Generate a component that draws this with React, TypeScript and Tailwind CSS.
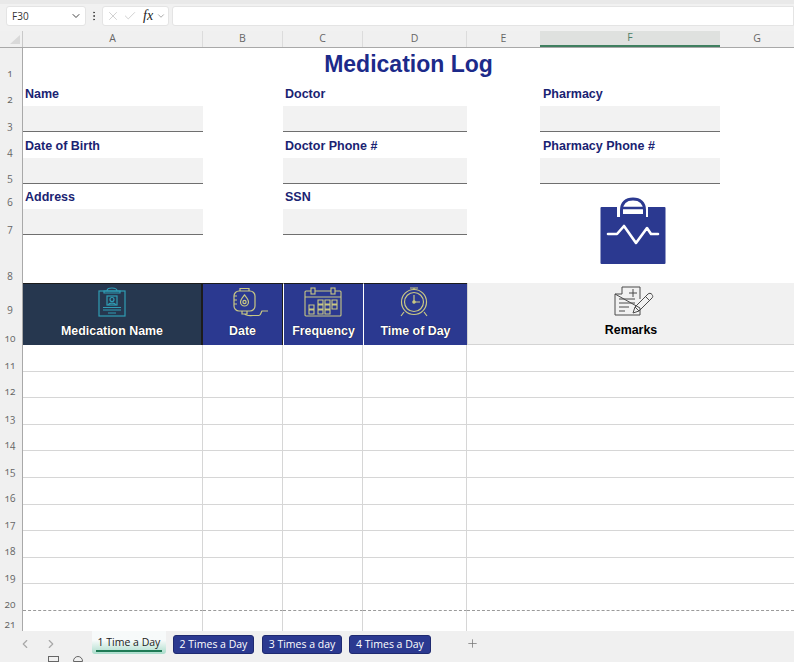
import React from 'react';
import { ChevronDown, ChevronLeft, ChevronRight, Plus, X, Check, EllipsisVertical } from 'lucide-react';

const sans = "font-['Liberation_Sans',Arial,sans-serif]";
const ui = "font-['Open_Sans',sans-serif]";

const rowHeaders: { label: string; h: string }[] = [
  { label: '1', h: 'h-[33px]' },
  { label: '2', h: 'h-[26px]' },
  { label: '3', h: 'h-[26px]' },
  { label: '4', h: 'h-[26px]' },
  { label: '5', h: 'h-[26px]' },
  { label: '6', h: 'h-[25px]' },
  { label: '7', h: 'h-[26px]' },
  { label: '8', h: 'h-[48px]' },
  { label: '9', h: 'h-[32px]' },
  { label: '10', h: 'h-[30px]' },
  { label: '11', h: 'h-[26.6px]' },
  { label: '12', h: 'h-[26.6px]' },
  { label: '13', h: 'h-[26.6px]' },
  { label: '14', h: 'h-[26.6px]' },
  { label: '15', h: 'h-[26.6px]' },
  { label: '16', h: 'h-[26.6px]' },
  { label: '17', h: 'h-[26.6px]' },
  { label: '18', h: 'h-[26.6px]' },
  { label: '19', h: 'h-[26.6px]' },
  { label: '20', h: 'h-[26.6px]' },
  { label: '21', h: 'h-[20px]' },
];

const emptyRows = [11, 12, 13, 14, 15, 16, 17, 18, 19, 20];

const Label = ({ text, className = '' }: { text: string; className?: string }) => (
  <div className={`flex items-end pb-[6px] pl-[2px] text-[12.5px] leading-none font-bold text-[#1a2372] ${className}`}>{text}</div>
);

const Field = ({ className = '' }: { className?: string }) => (
  <div className={`border-b border-[#6f6f6f] bg-[#f2f2f2] ${className}`} />
);

const ClipboardLogo = () => (
  <svg width="66" height="68" viewBox="0 0 66 68">
    <rect x="0.5" y="10" width="65" height="57" rx="1" fill="#2b3990" />
    <rect x="17" y="8" width="31" height="12" fill="#fff" />
    <path d="M21.500 18.500V13C21.500 6 26 2 33 2C40 2 44.500 6 44.500 13V18.500Z" fill="#fff" stroke="#2b3990" strokeWidth="3" />
    <path d="M22 11H44" stroke="#2b3990" strokeWidth="2.500" />
    <path d="M8 37H17L24 29L36 46L47 31L51 37H58" fill="none" stroke="#fff" strokeWidth="2.600" strokeLinejoin="round" strokeLinecap="round" />
  </svg>
);

const BadgeIcon = () => (
  <svg width="28" height="30" viewBox="0 0 28 30" fill="none" stroke="#2f9db5" strokeWidth="1.200">
    <rect x="1" y="4" width="26" height="25" />
    <path d="M9 4C9 1.500 11 1 14 1C17 1 19 1.500 19 4M6 4H22V6H6Z" />
    <rect x="9" y="9" width="10" height="9" />
    <circle cx="14" cy="12.500" r="2" />
    <path d="M10.500 18C11 15.500 17 15.500 17.500 18M5 20.500H23M5 23H23M10 26H18" />
  </svg>
);

const DripIcon = () => (
  <svg width="36" height="30" viewBox="0 0 36 30" fill="none" stroke="#c9c884" strokeWidth="1.200">
    <rect x="1" y="4" width="21" height="20" rx="5" />
    <path d="M7 4V1.500H16V4M9 24V27H14V24M11.500 27C13 29 16 28.500 20 28.500H26C28 28.500 28 25 29 24H35" />
    <path d="M11.500 8C9 11 7.500 12.500 7.500 15A4 4 0 0 0 15.500 15C15.500 12.500 14 11 11.500 8Z" />
    <circle cx="11.500" cy="15" r="1.600" />
    <path d="M1 9H4M1 13H4M1 17H4" />
  </svg>
);

const CalendarIcon = () => (
  <svg width="38" height="30" viewBox="0 0 38 30" fill="none" stroke="#c9c884" strokeWidth="1.100">
    <rect x="1" y="4" width="36" height="25" rx="1" />
    <path d="M1 10H37" />
    <rect x="7" y="1" width="4" height="6" fill="#2b3990" />
    <rect x="27" y="1" width="4" height="6" fill="#2b3990" />
    <path d="M14 13h5v4h-5zM21 13h5v4h-5zM28 13h5v4h-5zM5 18h5v4h-5zM14 18h5v4h-5zM21 18h5v4h-5zM28 18h5v4h-5zM5 23h5v4h-5zM14 23h5v4h-5zM21 23h5v4h-5z" />
  </svg>
);

const ClockIcon = () => (
  <svg width="32" height="30" viewBox="0 0 32 30" fill="none" stroke="#c9c884" strokeWidth="1.200">
    <circle cx="16" cy="15" r="12.500" />
    <circle cx="16" cy="15" r="9.500" />
    <path d="M16 8V15H22M12 1H20M16 1V3M6 25L3 29M26 25L29 29" />
    <circle cx="16" cy="15" r="1.200" fill="#c9c884" />
  </svg>
);

const RemarksIcon = () => (
  <svg width="40" height="30" viewBox="0 0 40 30" fill="none" stroke="#4a4a4a" strokeWidth="1">
    <path d="M8 1H26V13M26 22V29H1V8Z" />
    <path d="M8 1V8H1" />
    <path d="M15 7H23M19 3V11M5 13H21M5 17H21M5 21H15M5 25H11" />
    <path d="M19 27L21 21L34 8C35 7 37 7 38 8.500C39 10 39 11 38 12L25 25Z" />
    <path d="M21 21L25 25M31.500 10.500L35.500 14.500" />
  </svg>
);

const HeaderCell = ({ icon, text, className, span = '', iconClass = '' }: { icon: React.ReactNode; text: string; className: string; span?: string; iconClass?: string }) => (
  <div className={`flex flex-col items-center ${span} ${className}`}>
    <div className={`mt-[3px] flex h-[30px] items-center ${iconClass}`}>{icon}</div>
    <div className="mt-[4px] text-[12.4px] leading-[20px] font-bold">{text}</div>
  </div>
);

const Tab = ({ text, className }: { text: string; className: string }) => (
  <div className={`flex h-[19px] items-center justify-center rounded-[3px] border border-[#1f2a70] bg-[#2b3990] text-[10.5px] text-white ${className}`}>{text}</div>
);

const rowLine = (n: number) => (n === 20 ? 'border-b border-b-[#9a9a9a] [border-bottom-style:dashed]' : 'border-b border-b-[#d6d6d6]');

const whiteHead = 'bg-[#2b3990] text-white [text-shadow:0_0_1px_#000]';

export default function App() {
  return (
    <div className={`flex h-[662px] w-[794px] flex-col overflow-hidden bg-white ${ui}`}>
      {/* formula bar */}
      <div className="flex h-[31px] shrink-0 items-start bg-[#f1f1f1] pt-[6px] pl-[6px] shadow-[inset_0_4px_0_#e9e9e9]">
        <div className="flex h-[20px] w-[80px] items-center justify-between rounded-[3px] border border-[#e4e4e4] bg-white pr-[3px] pl-[5px] text-[10px] text-[#333]">
          F30
          <ChevronDown size={12} className="text-[#444]" />
        </div>
        <EllipsisVertical size={12} className="mt-[4px] ml-[2px] w-[12px] text-[#444]" />
        <div className="ml-[2px] flex h-[20px] w-[67px] items-center gap-[3px] rounded-[3px] border border-[#e4e4e4] bg-white pl-[3px]">
          <X size={14} className="text-[#bdbdbd]" strokeWidth={1.2} />
          <Check size={14} className="text-[#bdbdbd]" strokeWidth={1.2} />
          <span className="ml-[3px] font-['Liberation_Serif',serif] text-[14px] leading-none text-[#222] italic">fx</span>
          <ChevronDown size={10} className="text-[#999]" />
        </div>
        <div className="ml-[3px] h-[20px] flex-1 rounded-l-[3px] border border-[#e4e4e4] bg-white" />
      </div>

      {/* column headers */}
      <div className="flex h-[17px] shrink-0 border-b border-[#a9a9a9] bg-[#f0f0f0] text-[10.5px] text-[#666]">
        <div className="w-[23px] border-r border-[#c9c9c9]">
          <svg width="22" height="16" viewBox="0 0 22 16"><path d="M10 13H20V4Z" fill="#d9d9d9" /></svg>
        </div>
        <div className="flex w-[180px] items-center justify-center border-r border-[#dcdcdc]">A</div>
        <div className="flex w-[80px] items-center justify-center border-r border-[#dcdcdc]">B</div>
        <div className="flex w-[80px] items-center justify-center border-r border-[#dcdcdc]">C</div>
        <div className="flex w-[104px] items-center justify-center border-r border-[#dcdcdc]">D</div>
        <div className="flex w-[73px] items-center justify-center">E</div>
        <div className="flex w-[180px] items-center justify-center border-b-2 border-[#3f7f5f] bg-[#dfe1df] text-[#4d7f67]">F</div>
        <div className="flex flex-1 items-center justify-center">G</div>
      </div>

      <div className="flex min-h-0 flex-1">
        {/* row headers */}
        <div className="w-[23px] shrink-0 border-r border-[#a9a9a9] bg-[#f0f0f0] text-[10px] text-[#666] oldstyle-nums">
          {rowHeaders.map((r) => (
            <div key={r.label} className={`flex items-end justify-center pr-[2px] leading-[15px] ${r.h}`}>{r.label}</div>
          ))}
        </div>

        {/* sheet */}
        <div className={`grid flex-1 grid-cols-[180px_80px_80px_104px_73px_180px_74px] grid-rows-[32px_26px_26px_26px_26px_25px_26px_48px_62px_repeat(10,26.6px)_20px] ${sans}`}>
          <div className="col-span-7 flex items-center justify-center text-[23px] leading-none font-bold text-[#1c2a8a]">Medication Log</div>

          <Label text="Name" />
          <div />
          <Label text="Doctor" className="col-span-3" />
          <Label text="Pharmacy" className="col-span-2 pl-[3px]" />

          <Field />
          <div />
          <Field className="col-span-2" />
          <div />
          <Field />
          <div />

          <Label text="Date of Birth" />
          <div />
          <Label text="Doctor Phone #" className="col-span-3" />
          <Label text="Pharmacy Phone #" className="col-span-2 pl-[3px]" />

          <Field />
          <div />
          <Field className="col-span-2" />
          <div />
          <Field />
          <div />

          <Label text="Address" />
          <div />
          <Label text="SSN" className="col-span-2" />
          <div />
          <div className="row-span-3 flex justify-center pt-[13px] pl-[6px]">
            <ClipboardLogo />
          </div>
          <div className="row-span-3" />

          <Field />
          <div />
          <Field className="col-span-2" />
          <div />

          <div className="col-span-5" />

          <HeaderCell icon={<BadgeIcon />} text="Medication Name" className="border-t border-r-2 border-[#1c1c1c] bg-[#26374f] text-white [text-shadow:0_0_1px_#000]" />
          <HeaderCell icon={<DripIcon />} iconClass="ml-[16px]" text="Date" className={`border-t border-r border-[#1c1c1c] ${whiteHead}`} />
          <HeaderCell icon={<CalendarIcon />} iconClass="mr-[2px]" text="Frequency" className={`border-t border-l border-[#1c1c1c] border-l-white ${whiteHead}`} />
          <HeaderCell icon={<ClockIcon />} iconClass="mr-[4px]" text="Time of Day" className={`border-t border-l border-[#1c1c1c] border-l-white ${whiteHead}`} />
          <HeaderCell icon={<RemarksIcon />} iconClass="ml-[5px]" text="Remarks" span="col-span-3" className="border-b border-l border-[#d4d4d4] bg-[#f1f1f1] text-black" />

          {emptyRows.map((n) => (
            <React.Fragment key={n}>
              <div className={`border-r border-r-[#d6d6d6] ${rowLine(n)}`} />
              <div className={`border-r border-r-[#d6d6d6] ${rowLine(n)}`} />
              <div className={`border-r border-r-[#d6d6d6] ${rowLine(n)}`} />
              <div className={`border-r border-r-[#d6d6d6] ${rowLine(n)}`} />
              <div className={`col-span-3 ${rowLine(n)}`} />
            </React.Fragment>
          ))}
          <div className="border-r border-[#d6d6d6]" />
          <div className="border-r border-[#d6d6d6]" />
          <div className="border-r border-[#d6d6d6]" />
          <div className="border-r border-[#d6d6d6]" />
          <div className="col-span-3" />
        </div>
      </div>

      {/* sheet tabs */}
      <div className="h-[31px] shrink-0 bg-[#f0f0f0]">
        <div className="flex h-[24px] items-start">
          <ChevronLeft size={14} className="mt-[6px] ml-[18px] text-[#a8a8a8]" />
          <ChevronRight size={14} className="mt-[6px] ml-[12px] text-[#a8a8a8]" />
          <div className="ml-[34px] flex h-[23px] w-[74px] flex-col items-center justify-end rounded-b-[3px] bg-gradient-to-b from-[#f7fafa] from-40% to-[#a9dccb] text-[10.5px] text-[#222]">
            <span className="leading-[15px]">1 Time a Day</span>
            <div className="mb-[2px] h-[2px] w-[66px] bg-[#1e7a55]" />
          </div>
          <Tab text="2 Times a Day" className="mt-[4px] ml-[7px] w-[81px]" />
          <Tab text="3 Times a day" className="mt-[4px] ml-[8px] w-[80px]" />
          <Tab text="4 Times a Day" className="mt-[4px] ml-[7px] w-[82px]" />
          <Plus size={13} className="mt-[6px] ml-[35px] text-[#777]" strokeWidth={1.4} />
        </div>
        <div className="flex items-start pt-[1px] pl-[48px]">
          <div className="h-[6px] w-[11px] border border-[#666]" />
          <div className="ml-[14px] h-[6px] w-[10px] rounded-t-full border border-[#666]" />
        </div>
      </div>
    </div>
  );
}
